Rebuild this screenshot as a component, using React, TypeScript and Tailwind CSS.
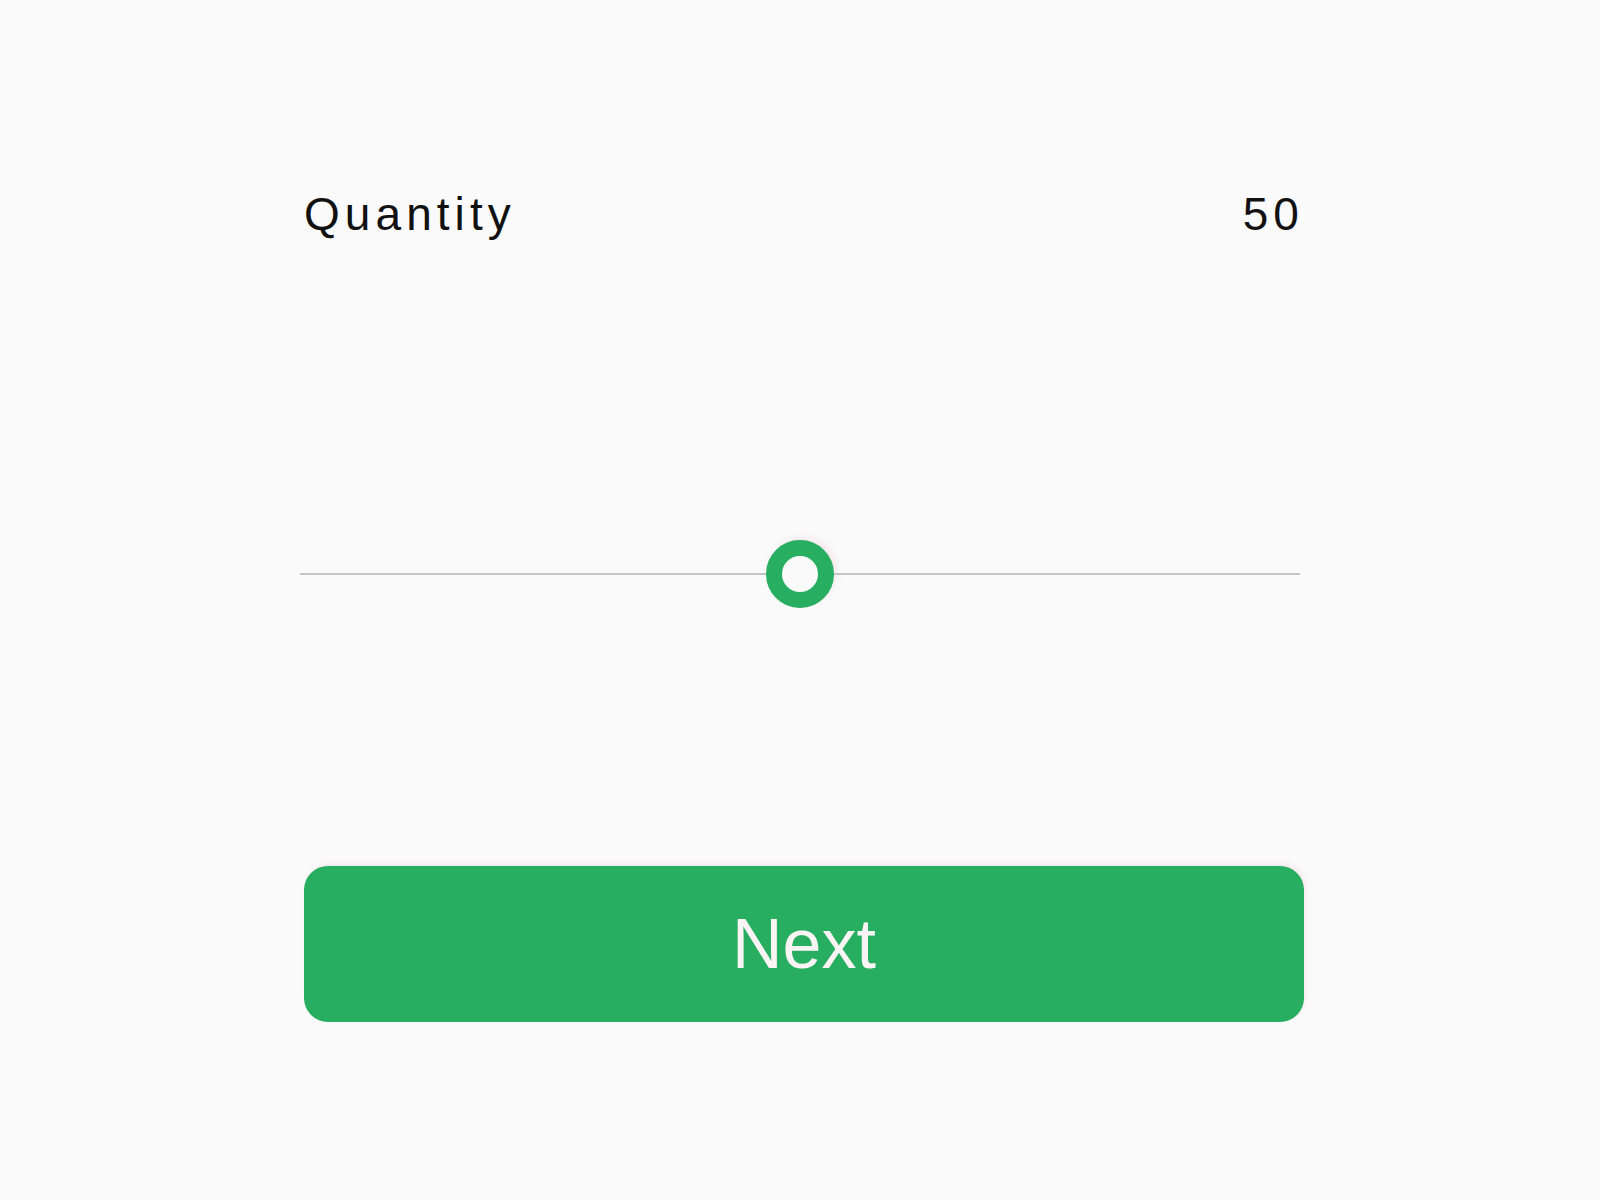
import React from "react";

export default function App() {
  const value = 50;
  return (
    <div className="min-h-[1200px] w-full bg-[#fafafa]" style={{ fontFamily: '"Liberation Sans", Arial, sans-serif' }}>
      <div className="mx-auto w-[1000px] pt-[188px]">
        <div className="-mr-[4px] ml-[4px] flex items-center justify-between text-[46px] leading-[53px] tracking-[0.11em] text-[#111]">
          <span>Quantity</span>
          <span>{value}</span>
        </div>
        <div className="relative mt-[299px] flex h-[68px] items-center">
          <div className="h-[2px] w-full bg-[#c4c4c4]" />
          <div
            className="absolute top-0 h-[68px] w-[68px] -translate-x-1/2 rounded-full border-[16px] border-[#27ae60] bg-[#fafafa] shadow-[3px_-3px_6px_rgba(240,200,210,0.35)]"
            style={{ left: `${value}%` }}
          />
        </div>
        <div className="-mr-[4px] ml-[4px] mt-[258px] flex">
          <button className="flex h-[156px] flex-1 items-center justify-center rounded-[24px] bg-[#27ae60] text-[70px] text-[#fbf4f4] shadow-[2px_-3px_4px_rgba(240,200,210,0.3)]">
            Next
          </button>
        </div>
      </div>
    </div>
  );
}
